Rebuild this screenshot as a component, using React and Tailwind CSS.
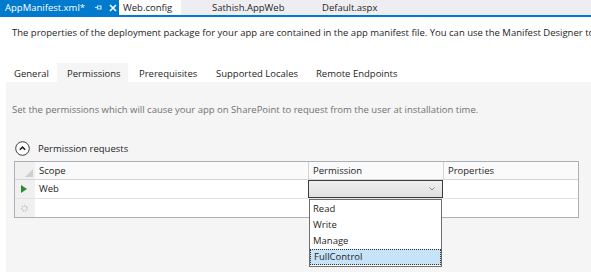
import React from "react";

const font = { fontFamily: '"Open Sans", "Noto Sans", sans-serif' };

const DocTabs = () => (
  <div className="flex h-[15px] bg-[#eeeef2] text-[9.5px] leading-none">
    <div className="flex items-center w-[119px] bg-[#007acc] text-white pl-[5px]">
      <span>AppManifest.xml*</span>
      <svg className="ml-[9px]" width="9" height="9" viewBox="0 0 9 9">
        <path d="M1 4.5h2.5M3.5 2.5v4M3.5 3h3.5v3H3.5" stroke="#cfe6f7" strokeWidth="1.2" fill="none" />
      </svg>
      <svg className="ml-[6px]" width="8" height="8" viewBox="0 0 8 8">
        <path d="M1 1l6 6M7 1L1 7" stroke="white" strokeWidth="1.6" />
      </svg>
    </div>
    <div className="flex items-center w-[62px] bg-white pl-[4px] text-[#1e1e1e]">Web.config</div>
    <div className="flex items-center pl-[31px] w-[141px] text-[#1e1e1e]">Sathish.AppWeb</div>
    <div className="flex items-center text-[#1e1e1e]">Default.aspx</div>
  </div>
);

const PageTab = ({ label, width, pl, active }) => (
  <div
    className={`flex items-center h-[19px] pt-[3px] ${width} ${pl} ${active ? "bg-[#f5f5f5]" : "bg-white"} text-[#1e1e1e]`}
  >
    {label}
  </div>
);

const Grid = () => (
  <div className="relative ml-[8px] w-[565px] border border-[#a9b0b8] bg-white text-[9.5px] text-[#1e1e1e]">
    <div className="grid grid-cols-[20px_273px_135px_1fr]">
      {/* header */}
      <div className="h-[18px] bg-[#f0f0f0] border-b border-[#d5d5d5] flex items-end justify-end pr-[2px] pb-[2px]">
        <svg width="8" height="8" viewBox="0 0 8 8">
          <path d="M8 0V8H0z" fill="#cfcfcf" />
        </svg>
      </div>
      <div className="h-[18px] bg-[#fafafa] border-b border-[#d5d5d5] flex items-center pl-[4px]">Scope</div>
      <div className="h-[18px] bg-[#fafafa] border-b border-l border-[#d5d5d5] flex items-center pl-[4px]">Permission</div>
      <div className="h-[18px] bg-[#fafafa] border-b border-l border-[#d5d5d5] flex items-center pl-[4px]">Properties</div>

      {/* row 1 */}
      <div className="h-[19px] bg-[#f0f0f0] border-b border-[#e3e3e3] flex items-center pl-[6px]">
        <svg width="6" height="8" viewBox="0 0 6 8">
          <path d="M0 0L6 4L0 8z" fill="#2f8a2f" />
        </svg>
      </div>
      <div className="h-[19px] border-b border-[#e3e3e3] flex items-center pl-[4px]">Web</div>
      <div className="h-[19px] border-b border-[#e3e3e3] relative">
        <div className="absolute inset-0 border border-[#3c3c3c] bg-gradient-to-b from-[#efefef] to-[#e0e0e0] flex items-center justify-end pr-[7px]">
          <svg width="6" height="4" viewBox="0 0 6 4">
            <path d="M0.5 0.5L3 3L5.5 0.5" stroke="#8a8a8a" strokeWidth="1" fill="none" />
          </svg>
        </div>
      </div>
      <div className="h-[19px] border-b border-[#e3e3e3]"></div>

      {/* row 2 */}
      <div className="h-[18px] bg-[#f0f0f0] flex items-center pl-[5px]">
        <svg width="9" height="9" viewBox="0 0 9 9">
          <circle cx="4.5" cy="4.5" r="2.6" stroke="#b8b8b8" strokeWidth="1.2" strokeDasharray="1.4 0.9" fill="none" />
        </svg>
      </div>
      <div className="h-[18px]"></div>
      <div className="h-[18px]"></div>
      <div className="h-[18px]"></div>
    </div>

    {/* open dropdown list */}
    <div className="absolute left-[294px] top-[37px] w-[133px] bg-white border border-[#6e6e6e] flex flex-col py-[1px]">
      <div className="h-[16px] flex items-center pl-[3px]">Read</div>
      <div className="h-[16px] flex items-center pl-[3px]">Write</div>
      <div className="h-[16px] flex items-center pl-[3px]">Manage</div>
      <div className="h-[16px] flex items-center pl-[3px] bg-[#c7e3f7] border border-dotted border-[#333]">FullControl</div>
    </div>
  </div>
);

export default function App() {
  return (
    <div className="w-[591px] h-[272px] overflow-hidden bg-white flex flex-col" style={font}>
      <DocTabs />
      <div className="h-[2px] bg-[#007acc]"></div>
      <div className="h-[46px] pl-[12px] pt-[9px] text-[9.5px] text-[#1e1e1e] whitespace-nowrap">
        The properties of the deployment package for your app are contained in the app manifest file. You can use the Manifest Designer to set or modify one or more of the properties.
      </div>
      <div className="flex pl-[6px] text-[9.5px]">
        <PageTab label="General" width="w-[51px]" pl="pl-[8px]" />
        <PageTab label="Permissions" width="w-[71px]" pl="pl-[10px]" active />
        <PageTab label="Prerequisites" width="w-[77px]" pl="pl-[11px]" />
        <PageTab label="Supported Locales" width="w-[100px]" pl="pl-[11px]" />
        <PageTab label="Remote Endpoints" width="w-[100px]" pl="pl-[11px]" />
      </div>
      <div className="flex-1 ml-[6px] bg-[#f5f5f5] text-[9.5px]">
        <div className="pt-[21px] pl-[6px] text-[#717171] whitespace-nowrap">
          Set the permissions which will cause your app on SharePoint to request from the user at installation time.
        </div>
        <div className="flex items-center mt-[24px] pl-[9px] text-[#1e1e1e]">
          <svg width="15" height="15" viewBox="0 0 15 15">
            <circle cx="7.5" cy="7.5" r="6.8" stroke="#3c3c3c" strokeWidth="1" fill="white" />
            <path d="M4.8 8.8L7.5 6.1L10.2 8.8" stroke="#1e1e1e" strokeWidth="1.5" fill="none" />
          </svg>
          <span className="ml-[8px]">Permission requests</span>
        </div>
        <div className="mt-[5px]">
          <Grid />
        </div>
      </div>
    </div>
  );
}
